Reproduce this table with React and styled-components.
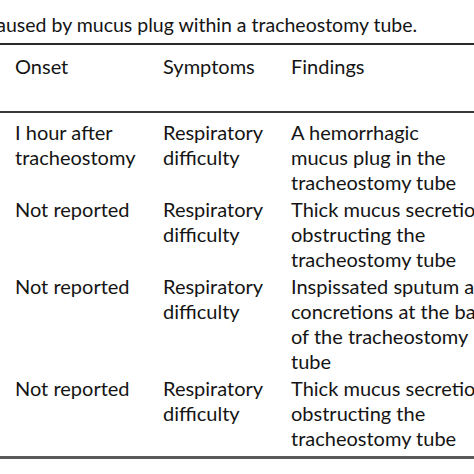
import React from 'react'
import styled, { createGlobalStyle } from 'styled-components'

const GlobalStyle = createGlobalStyle`
    html, body {
        margin: 0;
        padding: 0;
        background: #fff;
    }
    body {
        width: 474px;
        height: 474px;
        overflow: hidden;
        font-family: 'Lato', 'Open Sans', sans-serif;
        color: #141414;
    }
    * {
        box-sizing: border-box;
    }
`;

const Page = styled.div`
    padding-top: 12px;
`;

const Caption = styled.p`
    margin: 0 0 0 -13px;
    font-size: 19.5px;
    line-height: 25px;
    white-space: nowrap;
`;

const Table = styled.table`
    width: 100%;
    margin-top: 6px;
    border-collapse: separate;
    border-spacing: 0;
    font-size: 20px;
    line-height: 25px;
    table-layout: fixed;
`;

const Th = styled.th`
    text-align: left;
    font-weight: 400;
    vertical-align: top;
    border-top: 2px solid #2a2a2a;
    border-bottom: 2px solid #3a3a3a;
    padding: 9px 0 32px ${p => p.$pad}px;
    width: ${p => p.$w}px;
`;

const Td = styled.td`
    vertical-align: top;
    padding: 0 0 2px ${p => p.$pad}px;
    white-space: nowrap;
    overflow: hidden;
`;

const Row = styled.tr`
    &:first-child td {
        padding-top: 7px;
    }
    &:last-child td {
        padding-bottom: 5px;
        border-bottom: 3px solid #5a5a5a;
    }
`;

const rows = [
    ['I hour after\ntracheostomy', 'Respiratory\ndifficulty', 'A hemorrhagic\nmucus plug in the\ntracheostomy tube'],
    ['Not reported', 'Respiratory\ndifficulty', 'Thick mucus secretions\nobstructing the\ntracheostomy tube'],
    ['Not reported', 'Respiratory\ndifficulty', 'Inspissated sputum and\nconcretions at the base\nof the tracheostomy\ntube'],
    ['Not reported', 'Respiratory\ndifficulty', 'Thick mucus secretions\nobstructing the\ntracheostomy tube'],
];

const cols = [
    { w: 163, pad: 15 },
    { w: 128, pad: 0 },
    { w: 183, pad: 0 },
];

const Lines = ({ text }) =>
    text.split('\n').map((line, i) => (
        <React.Fragment key={i}>
            {i > 0 && <br />}
            {line}
        </React.Fragment>
    ));

export default function App() {
    return (
        <Page>
            <GlobalStyle />
            <Caption>caused by mucus plug within a tracheostomy tube.</Caption>
            <Table>
                <thead>
                    <tr>
                        {['Onset', 'Symptoms', 'Findings'].map((h, i) => (
                            <Th key={h} $w={cols[i].w} $pad={cols[i].pad}>{h}</Th>
                        ))}
                    </tr>
                </thead>
                <tbody>
                    {rows.map((r, ri) => (
                        <Row key={ri}>
                            {r.map((c, ci) => (
                                <Td key={ci} $pad={cols[ci].pad}>
                                    <Lines text={c} />
                                </Td>
                            ))}
                        </Row>
                    ))}
                </tbody>
            </Table>
        </Page>
    )
}
